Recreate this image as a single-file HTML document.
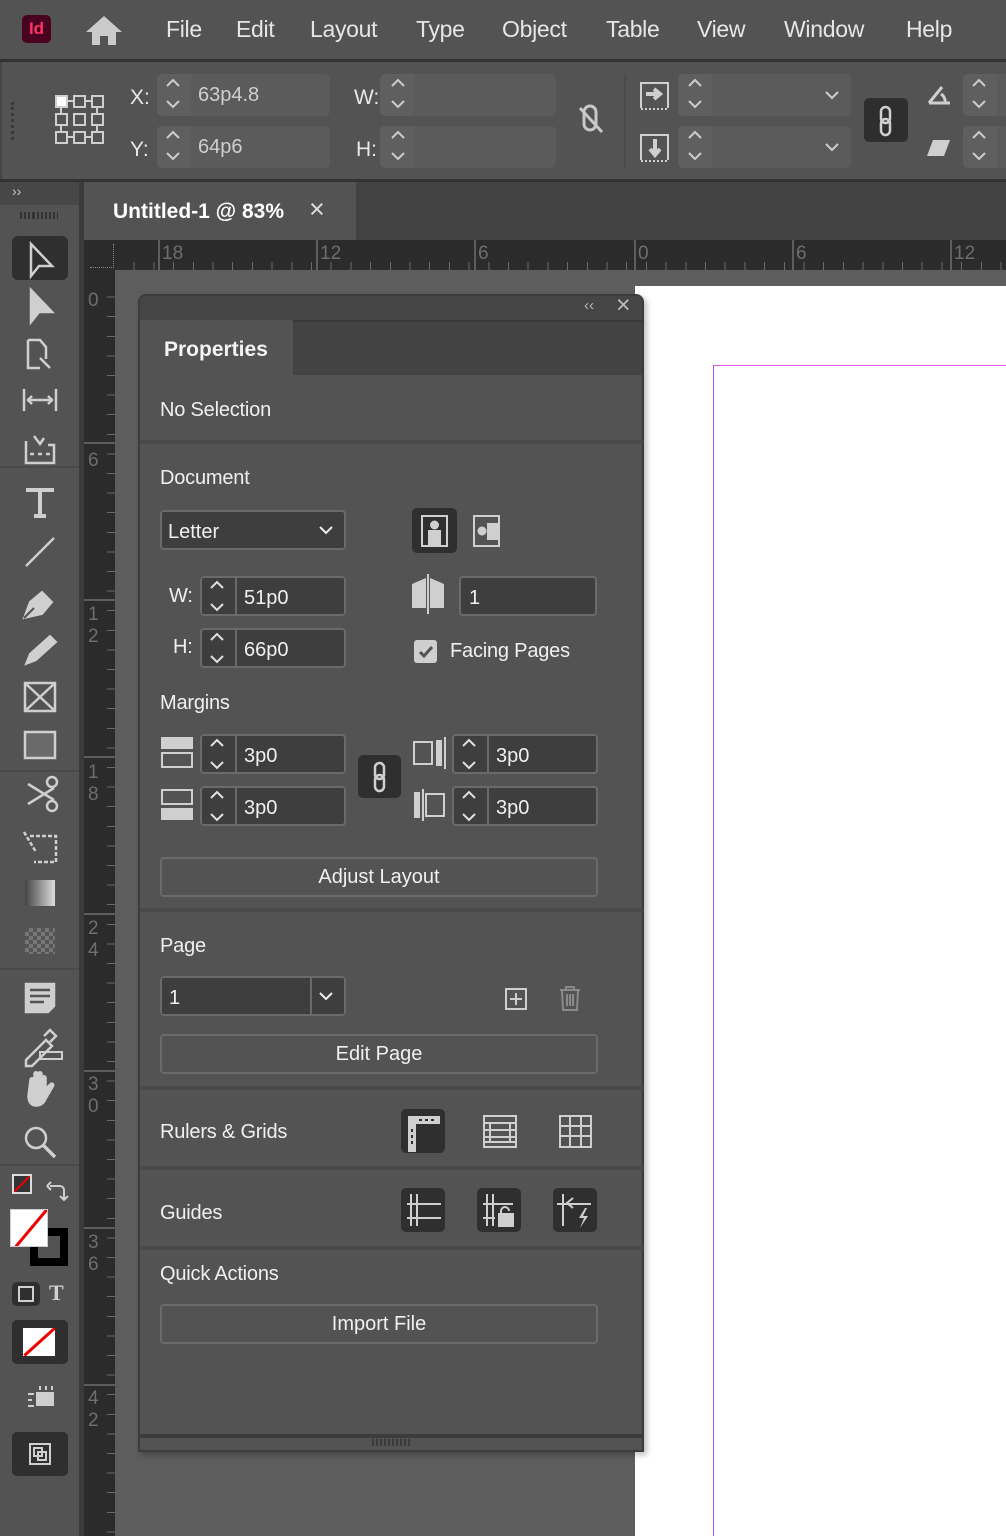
<!DOCTYPE html>
<html><head><meta charset="utf-8">
<style>
*{margin:0;padding:0;box-sizing:border-box}
body{width:1006px;height:1536px;overflow:hidden;background:#5d5d5d;font-family:"Liberation Sans",sans-serif;color:#e8e8e8;position:relative}
.a{position:absolute}
.t{position:absolute;white-space:nowrap;line-height:1}
.menu{font-size:23px;color:#e6e6e6;top:18px;letter-spacing:-0.3px}
.cin{position:absolute;background:#5b5b5b;border-radius:5px;height:42px}
.csp{position:absolute;left:0;top:0;width:34px;height:42px;background:#5f5f5f;border-radius:5px 0 0 5px}
.pin{position:absolute;background:#3e3e3e;border:2px solid #6a6a6a;border-radius:4px;height:40px;font-size:20px;color:#f0f0f0}
.psp{position:absolute;left:0;top:0;width:35px;height:36px;border-right:2px solid #6a6a6a}
.pv{position:absolute;left:42px;top:9px}
.btn{position:absolute;left:160px;width:438px;height:40px;border:2px solid #6a6a6a;border-radius:4px;text-align:center;font-size:20px;line-height:36px;color:#f0f0f0}
.lbl{position:absolute;font-size:20px;color:#f0f0f0;white-space:nowrap;line-height:1;letter-spacing:-0.2px}
.sep{position:absolute;left:140px;width:503px;height:4px;background:#4a4a4a}
.dk{position:absolute;background:#2f2f2f;border-radius:5px}
</style></head><body>
<!-- menu bar -->
<div class="a" style="left:0;top:0;width:1006px;height:60px;background:#535353"></div>
<div class="a" style="left:22px;top:15px;width:29px;height:28px;background:#49021f;border-radius:5px;color:#ff3366;font-weight:bold;font-size:17px;text-align:center;line-height:28px">Id</div>
<svg class="a" style="left:84px;top:14px" width="40" height="32"><path d="M20 2 L38 18 H32 V31 H24 V22 H16 V31 H8 V18 H2 Z" fill="#cbcbcb"/></svg>
<div class="t menu" style="left:166px">File</div>
<div class="t menu" style="left:236px">Edit</div>
<div class="t menu" style="left:310px">Layout</div>
<div class="t menu" style="left:416px">Type</div>
<div class="t menu" style="left:502px">Object</div>
<div class="t menu" style="left:606px">Table</div>
<div class="t menu" style="left:697px">View</div>
<div class="t menu" style="left:784px">Window</div>
<div class="t menu" style="left:906px">Help</div>
<div class="a" style="left:0;top:59px;width:1006px;height:3px;background:#333"></div>
<!-- control bar -->
<div class="a" style="left:0;top:62px;width:1006px;height:118px;background:#535353;border-left:2px solid #444"></div>
<div class="a" style="left:11px;top:102px;width:4px;height:38px;border-left:3px dotted #3a3a3a"></div>
<svg class="a" style="left:54px;top:94px" width="52" height="52" fill="none" stroke="#cfcfcf" stroke-width="2">
<rect x="2" y="2" width="11" height="11" fill="#fff"/><rect x="20" y="2" width="11" height="11"/><rect x="38" y="2" width="11" height="11"/>
<rect x="2" y="20" width="11" height="11"/><rect x="20" y="20" width="11" height="11"/><rect x="38" y="20" width="11" height="11"/>
<rect x="2" y="38" width="11" height="11"/><rect x="20" y="38" width="11" height="11"/><rect x="38" y="38" width="11" height="11"/>
<path d="M13 7h7M31 7h7M13 43h7M31 43h7M7 13v7M43 13v7M7 31v7M43 31v7"/></svg>
<div class="t" style="left:130px;top:87px;font-size:21px">X:</div>
<div class="t" style="left:130px;top:139px;font-size:21px">Y:</div>
<div class="cin" style="left:157px;top:74px;width:173px"><div class="csp"></div><div class="t" style="left:41px;top:11px;font-size:20px;color:#cfcfcf">63p4.8</div></div>
<div class="cin" style="left:157px;top:126px;width:173px"><div class="csp"></div><div class="t" style="left:41px;top:11px;font-size:20px;color:#cfcfcf">64p6</div></div>
<div class="t" style="left:354px;top:87px;font-size:21px">W:</div>
<div class="t" style="left:356px;top:139px;font-size:21px">H:</div>
<div class="cin" style="left:380px;top:74px;width:176px"><div class="csp"></div></div>
<div class="cin" style="left:380px;top:126px;width:176px"><div class="csp"></div></div>
<svg class="a" style="left:576px;top:102px" width="30" height="32" fill="none" stroke="#c8c8c8" stroke-width="3"><rect x="8" y="4" width="12" height="24" rx="6"/><path d="M4 6 L26 30" stroke-width="3"/></svg>
<div class="a" style="left:624px;top:74px;width:2px;height:94px;background:#4b4b4b"></div>
<svg class="a" style="left:640px;top:81px" width="30" height="30" fill="none" stroke="#cfcfcf" stroke-width="2"><path d="M1 27V2h27v25" /><path d="M1 28h28" stroke-dasharray="2 2"/><path d="M6 13h12M14 8l6 5-6 5" stroke-width="4"/></svg>
<svg class="a" style="left:640px;top:133px" width="30" height="30" fill="none" stroke="#cfcfcf" stroke-width="2"><path d="M1 27V2h27v25"/><path d="M1 28h28" stroke-dasharray="2 2"/><path d="M15 6v14M10 16l5 6 5-6" stroke-width="4"/></svg>
<div class="cin" style="left:678px;top:74px;width:173px"><div class="csp"></div></div>
<div class="cin" style="left:678px;top:126px;width:173px"><div class="csp"></div></div>
<div class="dk" style="left:864px;top:98px;width:44px;height:44px;background:#2e2e2e"></div>
<svg class="a" style="left:876px;top:105px" width="20" height="32" fill="none" stroke="#cfcfcf" stroke-width="2.5"><rect x="5" y="2" width="9" height="16" rx="4.5"/><rect x="5" y="14" width="9" height="16" rx="4.5"/></svg>
<svg class="a" style="left:926px;top:84px" width="26" height="22" fill="none" stroke="#cfcfcf" stroke-width="3"><path d="M3 19h21M3 19L16 3M15 10a9 9 0 0 1 4 9"/></svg>
<svg class="a" style="left:926px;top:139px" width="26" height="18"><path d="M7 1h17l-6 16H1z" fill="#cfcfcf"/></svg>
<div class="cin" style="left:963px;top:74px;width:60px"><div class="csp"></div></div>
<div class="cin" style="left:963px;top:126px;width:60px"><div class="csp"></div></div>
<svg class="a" style="left:0;top:0" width="1006" height="180" fill="none" stroke="#cdcdcd" stroke-width="2">
<path d="M167 86l6-6 6 6M167 101l6 6 6-6"/>
<path d="M167 138l6-6 6 6M167 153l6 6 6-6"/>
<path d="M392 86l6-6 6 6M392 101l6 6 6-6M392 138l6-6 6 6M392 153l6 6 6-6"/>
<path d="M689 86l6-6 6 6M689 101l6 6 6-6M689 138l6-6 6 6M689 153l6 6 6-6"/>
<path d="M973 86l6-6 6 6M973 101l6 6 6-6M973 138l6-6 6 6M973 153l6 6 6-6"/>
<path d="M826 92l6 6 6-6M826 144l6 6 6-6"/>
</svg>
<div class="a" style="left:0;top:179px;width:1006px;height:3px;background:#333"></div>
<!-- left toolbar -->
<div class="a" style="left:0;top:182px;width:79px;height:1354px;background:#535353"></div>
<div class="a" style="left:0;top:182px;width:79px;height:23px;background:#474747"></div>
<div class="t" style="left:12px;top:184px;font-size:14px;color:#ccc">››</div>
<div class="a" style="left:20px;top:212px;width:38px;height:7px;border-left:13px solid transparent;background:repeating-linear-gradient(90deg,#333 0 2px,transparent 2px 4px)"></div>
<div class="a" style="left:79px;top:182px;width:5px;height:1354px;background:#3b3b3b"></div>
<div class="dk" style="left:12px;top:236px;width:56px;height:44px;border-radius:6px"></div>
<svg class="a" style="left:0;top:236px" width="79" height="1300" fill="none" stroke="#cfcfcf" stroke-width="2.5">
<path d="M31 8v32l8-10h13z"/>
<path d="M31 54v32l8-10h13z" fill="#cfcfcf"/>
<path d="M28 104h12l6 7v12M28 104v28h12 M40 122l10 10"/>
<path d="M24 153v22M56 153v22M28 164h24M32 160l-4 4 4 4M48 160l4 4-4 4"/>
<path d="M26 205v22h28v-18h-6M34 200l6 8 4-6M30 218h4M38 218h4M46 218h4"/>
<path d="M26 254h28M40 254v26M34 280h12" stroke-width="4"/>
<path d="M26 330l28-28"/>
<path d="M24 382l6-16 12-10 10 10-10 12z" fill="#cfcfcf" stroke-width="2"/><path d="M24 382l10-10" stroke="#535353" stroke-width="2"/>
<path d="M26 428l4-10 20-18 6 6-20 18z" fill="#cfcfcf" stroke-width="2"/>
<path d="M25 447h30v28H25zM25 447l30 28M55 447l-30 28"/>
<rect x="25" y="496" width="30" height="26" fill="#6a6a6a"/>
<path d="M28 548l26 16M28 568l26-16" /><circle cx="52" cy="546" r="5"/><circle cx="52" cy="570" r="5"/>
<path d="M24 596l12 20M30 600h26v26H34" stroke-dasharray="4 2"/>
</svg>
<div class="a" style="left:25px;top:880px;width:30px;height:26px;background:linear-gradient(90deg,#444,#ddd)"></div>
<div class="a" style="left:25px;top:928px;width:30px;height:26px;background:repeating-conic-gradient(#777 0 25%,#555 0 50%) 0 0/8px 8px"></div>
<svg class="a" style="left:0;top:970px" width="79" height="400" fill="none" stroke="#cfcfcf" stroke-width="2.5">
<path d="M26 14h28v22l-6 6H26z" fill="#cfcfcf"/><path d="M30 20h20M30 26h20M30 32h14" stroke="#535353"/>
<path d="M26 90l20-20 6 6-20 20h-6zM44 66l6-6 6 6-6 6"/><rect x="40" y="82" width="22" height="7" stroke-width="2"/>
<path d="M30 110c0-3 4-3 4 0v10V104c0-3 4-3 4 0v16V104c0-3 4-3 4 0v16V108c0-3 4-3 4 0v10l4-4c2-2 5 0 3 3l-7 12c-2 5-6 7-10 7-5 0-8-4-8-10z" fill="#cfcfcf" stroke-width="1.5"/>
<circle cx="36" cy="168" r="10"/><path d="M43 175l12 12" stroke-width="3.5"/>
</svg>
<div class="a" style="left:12px;top:1174px;width:20px;height:20px;border:2px solid #ddd;background:#333;overflow:hidden"><div class="a" style="left:-4px;top:7px;width:24px;height:2px;background:#e00;transform:rotate(-45deg)"></div></div>
<div class="a" style="left:30px;top:1228px;width:38px;height:38px;background:#000"></div>
<div class="a" style="left:38px;top:1236px;width:22px;height:22px;background:#535353"></div>
<div class="a" style="left:10px;top:1209px;width:38px;height:38px;background:#fff;border:1px solid #ccc;overflow:hidden"><div class="a" style="left:-8px;top:17px;width:56px;height:3px;background:#e00;transform:rotate(-50deg)"></div></div>
<svg class="a" style="left:46px;top:1178px" width="24" height="24" fill="none" stroke="#cfcfcf" stroke-width="2"><path d="M4 8h10a4 4 0 0 1 4 4v10M1 8l4-4M1 8l4 4M14 18l4 4 4-4"/></svg>
<div class="dk" style="left:12px;top:1282px;width:28px;height:24px"></div>
<div class="a" style="left:18px;top:1286px;width:16px;height:16px;border:2px solid #cfcfcf"></div>
<div class="t" style="left:49px;top:1282px;font-size:22px;font-family:'Liberation Serif',serif;font-weight:bold;color:#cfcfcf">T</div>
<div class="dk" style="left:12px;top:1320px;width:56px;height:44px"></div>
<div class="a" style="left:23px;top:1328px;width:32px;height:28px;background:#fff;overflow:hidden"><div class="a" style="left:-4px;top:12px;width:42px;height:3px;background:#e00;transform:rotate(-42deg)"></div></div>
<svg class="a" style="left:26px;top:1384px" width="32" height="28"><rect x="10" y="8" width="18" height="14" fill="#cfcfcf"/><path d="M2 10h6M2 16h4M2 22h6M14 2v4M20 2v4M26 2v4" stroke="#cfcfcf" stroke-width="2"/></svg>
<div class="dk" style="left:12px;top:1432px;width:56px;height:44px"></div>
<svg class="a" style="left:28px;top:1442px" width="24" height="24" fill="none" stroke="#cfcfcf" stroke-width="2"><rect x="2" y="2" width="20" height="20"/><rect x="6" y="6" width="8" height="8"/><rect x="10" y="10" width="8" height="8"/></svg>
<div class="a" style="left:0;top:466px;width:79px;height:2px;background:#4a4a4a"></div>
<div class="a" style="left:0;top:770px;width:79px;height:2px;background:#4a4a4a"></div>
<div class="a" style="left:0;top:968px;width:79px;height:2px;background:#4a4a4a"></div>
<div class="a" style="left:0;top:1164px;width:79px;height:2px;background:#4a4a4a"></div>
<!-- tab bar -->
<div class="a" style="left:84px;top:182px;width:922px;height:58px;background:#424242"></div>
<div class="a" style="left:84px;top:182px;width:272px;height:58px;background:#535353"></div>
<div class="t" style="left:113px;top:201px;font-size:21px;font-weight:bold;color:#fff">Untitled-1 @ 83%</div>
<div class="t" style="left:309px;top:196px;font-size:27px;color:#ddd">×</div>
<!-- rulers -->
<div class="a" style="left:84px;top:240px;width:922px;height:30px;background:#2b2b2b"></div>
<div class="a" style="left:84px;top:270px;width:31px;height:1266px;background:#2b2b2b"></div>
<div class="a" style="left:107px;top:278px;width:8px;height:1258px;background:repeating-linear-gradient(180deg,transparent 0 18.6px,#6a6a6a 18.6px 19.6px)"></div>
<div class="a" style="left:115px;top:262px;width:891px;height:8px;background:repeating-linear-gradient(90deg,transparent 0 18.7px,#6a6a6a 18.7px 19.7px)"></div>
<div class="a" style="left:90px;top:244px;width:24px;height:24px;border-right:1px dotted #888;border-bottom:1px dotted #888"></div>
<svg class="a" style="left:0;top:240px" width="1006" height="1296" fill="#6e6e6e" font-family="Liberation Sans" font-size="19">
<g stroke="#6e6e6e" stroke-width="1.5"><path d="M159 0v30M317 0v30M475 0v30M635 0v30M793 0v30M951 0v30"/>
<path d="M84 203h31M84 360h31M84 517h31M84 674h31M84 831h31M84 988h31M84 1145h31"/></g>
<text x="162" y="19">18</text><text x="320" y="19">12</text><text x="478" y="19">6</text><text x="638" y="19">0</text><text x="796" y="19">6</text><text x="954" y="19">12</text>
<text x="88" y="66">0</text><text x="88" y="226">6</text>
<text x="88" y="380">1</text><text x="88" y="402">2</text>
<text x="88" y="538">1</text><text x="88" y="560">8</text>
<text x="88" y="694">2</text><text x="88" y="716">4</text>
<text x="88" y="850">3</text><text x="88" y="872">0</text>
<text x="88" y="1008">3</text><text x="88" y="1030">6</text>
<text x="88" y="1164">4</text><text x="88" y="1186">2</text>
</svg>
<!-- page -->
<div class="a" style="left:635px;top:286px;width:371px;height:1250px;background:#fff"></div>
<div class="a" style="left:713px;top:365px;width:293px;height:1px;background:#e060e0"></div>
<div class="a" style="left:713px;top:365px;width:1px;height:1171px;background:#a050f0"></div>
<!-- panel -->
<div class="a" style="left:138px;top:294px;width:506px;height:1158px;background:#535353;border:2px solid #3c3c3c;border-radius:8px 8px 0 0;box-shadow:3px 3px 6px rgba(0,0,0,.25)"></div>
<div class="a" style="left:140px;top:296px;width:502px;height:24px;background:#454545;border-radius:6px 6px 0 0"></div>
<div class="t" style="left:584px;top:298px;font-size:15px;color:#bbb">‹‹</div>
<div class="t" style="left:616px;top:293px;font-size:25px;color:#bbb">×</div>
<div class="a" style="left:140px;top:320px;width:502px;height:55px;background:#434343;border-top:2px solid #3a3a3a"></div>
<div class="a" style="left:140px;top:320px;width:153px;height:55px;background:#535353"></div>
<div class="t" style="left:164px;top:339px;font-size:21px;font-weight:bold;color:#f4f4f4">Properties</div>
<div class="lbl" style="left:160px;top:400px">No Selection</div>
<div class="sep" style="top:440px"></div>
<div class="lbl" style="left:160px;top:468px">Document</div>
<div class="pin" style="left:160px;top:510px;width:186px"><div class="t" style="left:6px;top:10px">Letter</div></div>
<svg class="a" style="left:318px;top:524px" width="16" height="12" fill="none" stroke="#eee" stroke-width="2"><path d="M2 3l6 6 6-6"/></svg>
<div class="dk" style="left:412px;top:508px;width:45px;height:45px"></div>
<svg class="a" style="left:420px;top:514px" width="30" height="34" fill="none" stroke="#cfcfcf" stroke-width="2"><rect x="2" y="2" width="25" height="30"/><circle cx="14.5" cy="11" r="3.5" fill="#cfcfcf"/><path d="M9 17h11v15H9z" fill="#cfcfcf"/></svg>
<svg class="a" style="left:472px;top:514px" width="30" height="34" fill="none" stroke="#cfcfcf" stroke-width="2"><rect x="2" y="2" width="25" height="30"/><circle cx="10" cy="17" r="3.5" fill="#cfcfcf"/><path d="M16 10h11v15H16z" fill="#cfcfcf"/></svg>
<div class="lbl" style="left:169px;top:586px">W:</div>
<div class="lbl" style="left:173px;top:637px">H:</div>
<div class="pin" style="left:200px;top:576px;width:146px"><div class="psp"></div><div class="pv">51p0</div></div>
<div class="pin" style="left:200px;top:628px;width:146px"><div class="psp"></div><div class="pv">66p0</div></div>
<svg class="a" style="left:410px;top:574px" width="36" height="40"><path d="M2 10l14-6v30H2zM20 4l14 6v24H20z" fill="#cfcfcf"/><path d="M18 0v40" stroke="#cfcfcf" stroke-width="2"/></svg>
<div class="pin" style="left:459px;top:576px;width:138px"><div class="t" style="left:8px;top:10px">1</div></div>
<div class="a" style="left:414px;top:640px;width:23px;height:23px;background:#cfcfcf;border-radius:3px"></div>
<svg class="a" style="left:416px;top:642px" width="20" height="20" fill="none" stroke="#535353" stroke-width="3"><path d="M4 10l4 4 8-9"/></svg>
<div class="lbl" style="left:450px;top:641px">Facing Pages</div>
<div class="lbl" style="left:160px;top:693px">Margins</div>
<svg class="a" style="left:160px;top:736px" width="34" height="34"><rect x="1" y="1" width="32" height="12" fill="#cfcfcf"/><rect x="2" y="17" width="30" height="14" fill="none" stroke="#cfcfcf" stroke-width="2"/></svg>
<svg class="a" style="left:160px;top:788px" width="34" height="34"><rect x="2" y="2" width="30" height="14" fill="none" stroke="#cfcfcf" stroke-width="2"/><rect x="1" y="20" width="32" height="12" fill="#cfcfcf"/></svg>
<svg class="a" style="left:412px;top:736px" width="34" height="34"><rect x="2" y="6" width="18" height="22" fill="none" stroke="#cfcfcf" stroke-width="2"/><rect x="24" y="4" width="6" height="26" fill="#cfcfcf"/><path d="M33 1v32" stroke="#cfcfcf" stroke-width="2"/></svg>
<svg class="a" style="left:412px;top:788px" width="34" height="34"><rect x="2" y="4" width="6" height="26" fill="#cfcfcf"/><rect x="14" y="6" width="18" height="22" fill="none" stroke="#cfcfcf" stroke-width="2"/><path d="M11 1v32" stroke="#cfcfcf" stroke-width="2"/></svg>
<div class="pin" style="left:200px;top:734px;width:146px"><div class="psp"></div><div class="pv">3p0</div></div>
<div class="pin" style="left:200px;top:786px;width:146px"><div class="psp"></div><div class="pv">3p0</div></div>
<div class="pin" style="left:452px;top:734px;width:146px"><div class="psp"></div><div class="pv">3p0</div></div>
<div class="pin" style="left:452px;top:786px;width:146px"><div class="psp"></div><div class="pv">3p0</div></div>
<div class="dk" style="left:358px;top:755px;width:43px;height:43px"></div>
<svg class="a" style="left:370px;top:761px" width="20" height="32" fill="none" stroke="#cfcfcf" stroke-width="2.5"><rect x="5" y="2" width="9" height="16" rx="4.5"/><rect x="5" y="14" width="9" height="16" rx="4.5"/></svg>
<svg class="a" style="left:0;top:0" width="644" height="840" fill="none" stroke="#e0e0e0" stroke-width="2">
<path d="M211 588l6-6 6 6M211 604l6 6 6-6M211 640l6-6 6 6M211 656l6 6 6-6"/>
<path d="M211 746l6-6 6 6M211 762l6 6 6-6M211 798l6-6 6 6M211 814l6 6 6-6"/>
<path d="M463 746l6-6 6 6M463 762l6 6 6-6M463 798l6-6 6 6M463 814l6 6 6-6"/>
</svg>
<div class="btn" style="top:857px">Adjust Layout</div>
<div class="sep" style="top:908px"></div>
<div class="lbl" style="left:160px;top:936px">Page</div>
<div class="pin" style="left:160px;top:976px;width:186px"><div class="t" style="left:7px;top:10px">1</div><div class="a" style="left:148px;top:0;width:2px;height:36px;background:#6a6a6a"></div></div>
<svg class="a" style="left:318px;top:990px" width="16" height="12" fill="none" stroke="#eee" stroke-width="2"><path d="M2 3l6 6 6-6"/></svg>
<svg class="a" style="left:504px;top:987px" width="24" height="24" fill="none" stroke="#cfcfcf" stroke-width="2"><rect x="2" y="2" width="20" height="20"/><path d="M12 6v12M6 12h12"/></svg>
<svg class="a" style="left:558px;top:985px" width="24" height="26" fill="none" stroke="#8a8a8a" stroke-width="2"><path d="M2 5h20M8 5V2h8v3M4 5l1 20h14l1-20M9 9v12M12 9v12M15 9v12"/></svg>
<div class="btn" style="top:1034px">Edit Page</div>
<div class="sep" style="top:1086px"></div>
<div class="lbl" style="left:160px;top:1122px">Rulers &amp; Grids</div>
<div class="dk" style="left:401px;top:1109px;width:44px;height:44px"></div>
<svg class="a" style="left:401px;top:1109px" width="200" height="44"><path d="M7 7h32v8H15v28H7z" fill="#cfcfcf"/><path d="M18 11h3M24 11h3M30 11h3M11 20v3M11 26v3M11 32v3" stroke="#2f2f2f" stroke-width="2"/>
<g fill="none" stroke="#cfcfcf" stroke-width="2"><rect x="83" y="7" width="32" height="31"/><path d="M83 14h32M83 21h32M83 28h32M83 33h32M89 14v20M109 14v20"/>
<rect x="159" y="7" width="31" height="31"/><path d="M159 17h31M159 27h31M169 7v31M180 7v31"/></g></svg>
<div class="sep" style="top:1166px"></div>
<div class="lbl" style="left:160px;top:1203px">Guides</div>
<div class="dk" style="left:401px;top:1188px;width:44px;height:44px"></div>
<div class="dk" style="left:477px;top:1188px;width:44px;height:44px"></div>
<div class="dk" style="left:553px;top:1188px;width:44px;height:44px"></div>
<svg class="a" style="left:401px;top:1188px" width="200" height="44" fill="none" stroke="#cfcfcf" stroke-width="2">
<path d="M10 6v32M16 6v32M6 16h34M6 30h34"/>
<path d="M86 6v32M92 6v32M82 16h30M82 30h12"/><path d="M98 26h14v12H98z" fill="#cfcfcf"/><path d="M100 26v-3a4 4 0 0 1 8 0"/>
<path d="M162 6v32M156 16h34M172 10l-6 5 6 5"/><path d="M184 20l-6 10h5l-4 10 8-12h-5l4-8z" fill="#cfcfcf" stroke="none"/></svg>
<div class="sep" style="top:1246px"></div>
<div class="lbl" style="left:160px;top:1264px">Quick Actions</div>
<div class="btn" style="top:1304px">Import File</div>
<div class="a" style="left:140px;top:1434px;width:502px;height:4px;background:#3c3c3c"></div>
<div class="a" style="left:372px;top:1439px;width:38px;height:7px;background:repeating-linear-gradient(90deg,#3a3a3a 0 2px,transparent 2px 4px)"></div>
</body></html>
